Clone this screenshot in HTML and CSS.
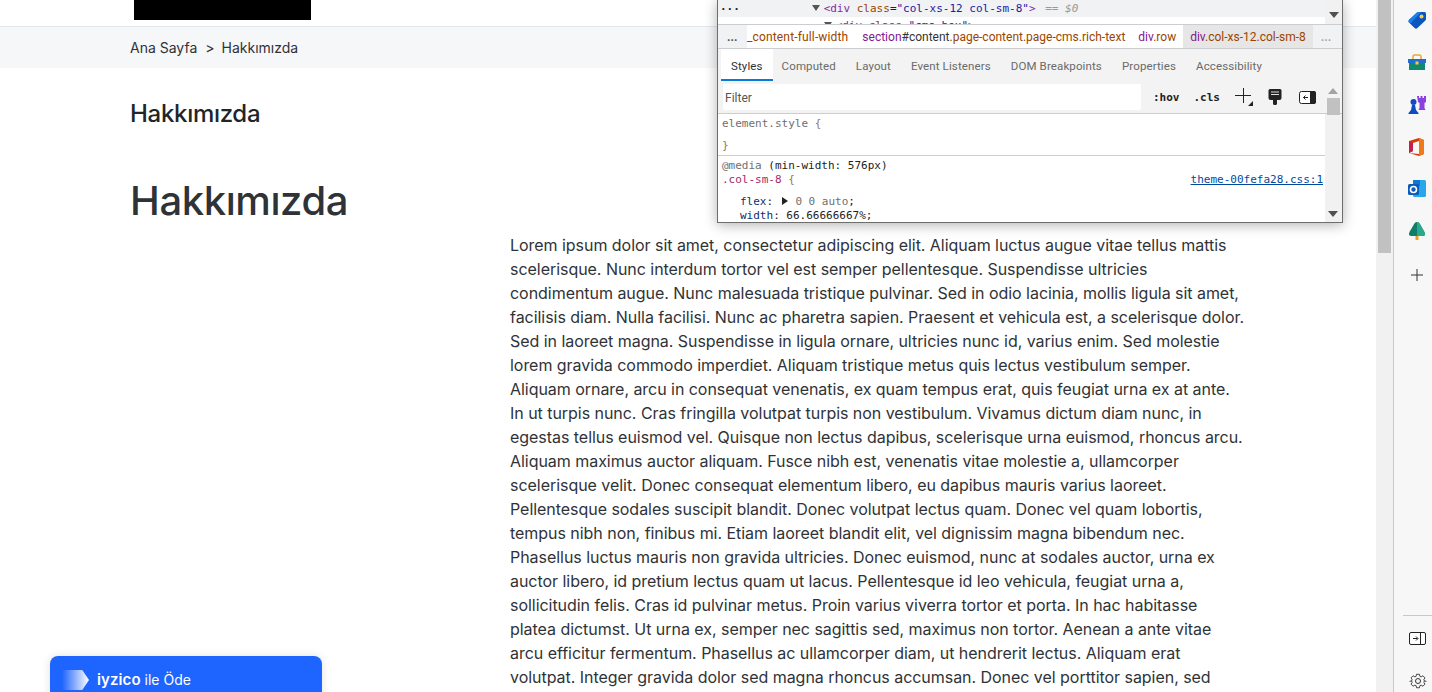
FILE: index.html
```html
<!DOCTYPE html>
<html lang="tr">
<head>
  <meta charset="UTF-8">
  <meta name="viewport" content="width=device-width, initial-scale=1.0">
  <title>Hakkımızda</title>
  <link rel="stylesheet" href="styles.css">
</head>
<body>
  <div class="app">
    <div class="page">
      <header class="top">
        <div class="logo"></div>
      </header>

      <nav class="crumbs">
        <a href="#">Ana Sayfa</a>
        <span class="sep">&gt;</span>
        <a href="#">Hakkımızda</a>
      </nav>

      <main class="content">
        <div class="side-title">Hakkımızda</div>
        <h1>Hakkımızda</h1>
        <p class="lorem">Lorem ipsum dolor sit amet, consectetur adipiscing elit. Aliquam luctus augue vitae tellus mattis scelerisque. Nunc interdum tortor vel est semper pellentesque. Suspendisse ultricies condimentum augue. Nunc malesuada tristique pulvinar. Sed in odio lacinia, mollis ligula sit amet, facilisis diam. Nulla facilisi. Nunc ac pharetra sapien. Praesent et vehicula est, a scelerisque dolor. Sed in laoreet magna. Suspendisse in ligula ornare, ultricies nunc id, varius enim. Sed molestie lorem gravida commodo imperdiet. Aliquam tristique metus quis lectus vestibulum semper. Aliquam ornare, arcu in consequat venenatis, ex quam tempus erat, quis feugiat urna ex at ante. In ut turpis nunc. Cras fringilla volutpat turpis non vestibulum. Vivamus dictum diam nunc, in egestas tellus euismod vel. Quisque non lectus dapibus, scelerisque urna euismod, rhoncus arcu. Aliquam maximus auctor aliquam. Fusce nibh est, venenatis vitae molestie a, ullamcorper scelerisque velit. Donec consequat elementum libero, eu dapibus mauris varius laoreet. Pellentesque sodales suscipit blandit. Donec volutpat lectus quam. Donec vel quam lobortis, tempus nibh non, finibus mi. Etiam laoreet blandit elit, vel dignissim magna bibendum nec. Phasellus luctus mauris non gravida ultricies. Donec euismod, nunc at sodales auctor, urna ex auctor libero, id pretium lectus quam ut lacus. Pellentesque id leo vehicula, feugiat urna a, sollicitudin felis. Cras id pulvinar metus. Proin varius viverra tortor et porta. In hac habitasse platea dictumst. Ut urna ex, semper nec sagittis sed, maximus non tortor. Aenean a ante vitae arcu efficitur fermentum. Phasellus ac ullamcorper diam, ut hendrerit lectus. Aliquam erat volutpat. Integer gravida dolor sed magna rhoncus accumsan. Donec vel porttitor sapien, sed</p>
      </main>

      <div class="pay-btn">
        <span class="pay-mark"></span>
        <span class="pay-text"><b>iyzico</b> ile Öde</span>
      </div>

      <section class="devtools">
        <div class="dom-tree">
          <div class="dom-row selected">
            <span class="dots">...</span>
            <span class="tri"></span>
            <span class="t-tag">&lt;div</span> <span class="t-attr">class</span>=<span class="t-val">"col-xs-12 col-sm-8"</span><span class="t-tag">&gt;</span>
            <span class="t-eq">== <i>$0</i></span>
          </div>
          <div class="dom-row second">
            <span class="tri"></span>
            <span class="t-tag">&lt;div</span> <span class="t-attr">class</span>=<span class="t-val">"cms-box"</span><span class="t-tag">&gt;</span>
          </div>
          <span class="tree-scroll"><span class="tree-down"></span></span>
        </div>

        <div class="path-bar">
          <span class="path-more">...</span>
          <span class="path-item path-first"><span class="c-or">_content-full-width</span></span>
          <span class="path-item path-section"><span class="c-pu">section</span>#content<span class="c-or">.page-content.page-cms.rich-text</span></span>
          <span class="path-item"><span class="c-pu">div</span><span class="c-or">.row</span></span>
          <span class="path-item active"><span class="c-pu">div</span><span class="c-or">.col-xs-12.col-sm-8</span></span>
          <span class="path-more end">...</span>
        </div>

        <div class="tabs">
          <span class="tab active">Styles</span>
          <span class="tab">Computed</span>
          <span class="tab">Layout</span>
          <span class="tab">Event Listeners</span>
          <span class="tab">DOM Breakpoints</span>
          <span class="tab">Properties</span>
          <span class="tab">Accessibility</span>
        </div>

        <div class="filter-bar">
          <div class="filter">Filter</div>
          <span class="tool">:hov</span>
          <span class="tool">.cls</span>
          <svg class="tool-icon plus-icon" width="20" height="20" viewBox="0 0 20 20"><path d="M9.500 1v15M1 8.500h16" stroke="#222" fill="none"/><path d="M19 14v5h-5z" fill="#222"/></svg>
          <svg class="tool-icon paint" width="14" height="16" viewBox="0 0 14 16"><path d="M2 0h10a1.500 1.500 0 0 1 1.500 1.500v7.500a2 2 0 0 1-2 2H9v3.500a1.500 1.500 0 0 1-1.500 1.500h-1A1.500 1.500 0 0 1 5 14.500V11H2.500a2 2 0 0 1-2-2V1.500A1.500 1.500 0 0 1 2 0z" fill="#222"/><path d="M3 3h8M3 5.500h8" stroke="#ddd"/></svg>
          <svg class="tool-icon" width="17" height="13" viewBox="0 0 17 13"><rect x=".5" y=".5" width="16" height="12" rx="2" fill="#fff" stroke="#222"/><path d="M11 0h4a2 2 0 0 1 2 2v9a2 2 0 0 1-2 2h-4z" fill="#222"/><path d="M9 6.500H4.500M6.500 4.500l-2 2 2 2" stroke="#222" fill="none"/></svg>
        </div>

        <div class="rules">
          <div class="rules-body">
            <div class="rule first">
              <div class="code gray">element.style <span class="brace">{</span></div>
              <div class="code brace gap">}</div>
            </div>
            <div class="rule">
              <div class="code"><span class="gray">@media</span> (min-width: 576px)</div>
              <div class="code sel-row">
                <span><span class="sel">.col-sm-8</span> <span class="brace">{</span></span>
                <a class="src" href="#">theme-00fefa28.css:1</a>
              </div>
              <div class="code prop prop-first"><span class="p-name">flex</span>: <span class="flex-tri"></span> <span class="gray">0 0 auto</span>;</div>
              <div class="code prop"><span class="p-name">width</span>: 66.66666667%;</div>
            </div>
          </div>
          <div class="rules-scroll">
            <span class="arrow-up"></span>
            <span class="thumb"></span>
            <span class="arrow-down"></span>
          </div>
        </div>
      </section>
    </div>

    <div class="page-scroll"><span class="page-thumb"></span></div>

    <aside class="sidebar">
      <div class="side-top">
        <svg width="20" height="20" viewBox="0 0 20 20"><path d="M12 1h5.500A1.500 1.500 0 0 1 19 2.500V8a2 2 0 0 1-.6 1.400l-8 7.600a2 2 0 0 1-2.800 0L2 11.500a2 2 0 0 1 0-2.800l8-7.200A2.500 2.500 0 0 1 12 1z" fill="#0a55c0"/><path d="M2 9l8-7.500A2.500 2.500 0 0 1 12 1h2L3.500 12.500 2 11.500a2 2 0 0 1 0-2.500z" fill="#1a7fe8"/><circle cx="14.500" cy="5.500" r="2" fill="#ffc83d"/></svg>
        <svg width="20" height="20" viewBox="0 0 20 20"><path d="M6 6V3.500A1.500 1.500 0 0 1 7.500 2h5A1.500 1.500 0 0 1 14 3.500V6" fill="none" stroke="#e8a93a" stroke-width="1.500"/><rect x="1" y="6" width="18" height="4" fill="#1f6fd0"/><rect x="2" y="10" width="16" height="7" fill="#0f8a70"/><rect x="8.500" y="8.500" width="3" height="3" fill="#ffc83d"/></svg>
        <svg width="20" height="20" viewBox="0 0 20 20"><path d="M11 1h2v2h1.500V1h2v2H18V1h2v6l-1.500 1v5l1 2h-7l1-2V8L12 7z" transform="translate(-1 0)" fill="#8b3fe0"/><circle cx="6.500" cy="7" r="3" fill="#0f4cc4"/><path d="M5 10h3l1 5 2.500 3v1H1.500v-1L4 15z" fill="#0f4cc4"/></svg>
        <svg width="20" height="20" viewBox="0 0 20 20"><path d="M2 4l10-3 5 2v14l-5 2-10-3 10 1V4L6 6v8l-4 2z" fill="#d83b01"/><path d="M2 4l4 2v8l-4 2z" fill="#c4204f"/><path d="M12 1l5 2v14l-5 2z" fill="#f07a1a"/></svg>
        <svg width="20" height="20" viewBox="0 0 20 20"><rect x="6" y="1" width="13" height="17" rx="1.500" fill="#28a8ea"/><rect x="6" y="1" width="7" height="6" fill="#0f78d4"/><rect x="1" y="5" width="11" height="11" rx="1.500" fill="#0a5cb8"/><circle cx="6.500" cy="10.500" r="3" fill="none" stroke="#fff" stroke-width="1.600"/></svg>
        <svg width="20" height="20" viewBox="0 0 20 20"><path d="M10 1c2 0 3 2 4 4s4 6 4 8-1 2-8 2-8 0-8-2 3-6 4-8 2-4 4-4z" fill="#0f7d68"/><path d="M10 1c2 0 3 2 4 4s4 6 4 8-1 2-8 2z" fill="#2aa98c"/><rect x="8.500" y="15" width="3" height="4" fill="#f0a020"/></svg>
        <svg class="plus" width="14" height="14" viewBox="0 0 14 14"><path d="M7 1v12M1 7h12" stroke="#333" fill="none"/></svg>
      </div>
      <div class="side-bottom">
        <svg width="17" height="14" viewBox="0 0 17 14"><rect x=".5" y=".5" width="16" height="12" rx="1.500" fill="#fff" stroke="#222"/><path d="M11.500 1v11" stroke="#222"/><path d="M4 6.500h4.500M7 4.500l2 2-2 2" stroke="#222" fill="none"/></svg>
        <svg width="18" height="18" viewBox="0 0 18 18" fill="none" stroke="#333"><circle cx="9" cy="9" r="2.500"/><path d="M7.400 1.500h3.200l.5 2.300 1.400.6 2-1.200 2.200 2.300-1.200 2 .6 1.400 2.300.5M7.400 1.500l-.5 2.300-1.400.6-2-1.200-2.200 2.300 1.200 2-.6 1.400-2.300.5" transform="translate(.9 .9) scale(.9)"/><path d="M7.400 16.500h3.200l.5-2.300 1.400-.6 2 1.200 2.200-2.300-1.200-2 .6-1.400 .2-.1M7.400 16.500l-.5-2.300-1.400-.6-2 1.200-2.200-2.300 1.200-2-.6-1.400-.2-.1" transform="translate(.9 .9) scale(.9)"/></svg>
      </div>
    </aside>
  </div>
</body>
</html>
```
FILE: styles.css
```css
* {
  box-sizing: border-box;
}
html, body {
  margin: 0;
  height: 100%;
  overflow: hidden;
}
body {
  font-family: Inter, "Liberation Sans", sans-serif;
  color: #2f3337;
  background: #fff;
}
.app {
  display: flex;
  height: 692px;
}
.page {
  flex: 1;
  position: relative;
  overflow: hidden;
}

/* site header */
.top {
  height: 27px;
  padding-left: 134px;
  border-bottom: 1px solid #e6e7e9;
}
.logo {
  width: 177px;
  height: 20px;
  background: #000;
}
.crumbs {
  height: 41px;
  padding-left: 130px;
  display: flex;
  align-items: center;
  gap: 8px;
  background: #f6f7f9;
  font-size: 14px;
}
.crumbs a {
  color: #2f3337;
  text-decoration: none;
}
.crumbs .sep {
  margin-right: -1px;
}
.content {
  padding: 32px 0 0 130px;
}
.side-title {
  font-size: 24px;
  line-height: 28px;
  font-weight: 500;
  letter-spacing: -0.3px;
  color: #212529;
}
.content h1 {
  margin: 49px 0 0;
  font-size: 40px;
  line-height: 48px;
  font-weight: 500;
  letter-spacing: -0.4px;
}
.lorem {
  margin: 8px 0 0 380px;
  width: 736px;
  font-size: 16px;
  line-height: 24px;
  letter-spacing: -0.04px;
}

/* pay button */
.pay-btn {
  position: absolute;
  left: 50px;
  top: 656px;
  width: 272px;
  height: 50px;
  padding: 14px 12px;
  display: flex;
  gap: 8px;
  align-items: flex-start;
  background: #1e64ff;
  border-radius: 8px 8px 0 0;
  box-shadow: 0 0 10px rgba(0,0,0,0.12);
  color: #fff;
}
.pay-mark {
  width: 27px;
  height: 20px;
  background: linear-gradient(90deg, #1e64ff, #fff);
  clip-path: polygon(0 0, 75% 0, 100% 50%, 75% 100%, 0 100%);
}
.pay-text {
  font-size: 14px;
  line-height: 20px;
}
.pay-text b {
  font-size: 15px;
  font-weight: 600;
  letter-spacing: 0.1px;
}

/* devtools popup */
.devtools {
  position: absolute;
  left: 717px;
  top: 0;
  width: 626px;
  height: 223px;
  display: flex;
  flex-direction: column;
  background: #fff;
  border: 1px solid #6e6e6e;
  border-top: 0;
  box-shadow: 0 2px 12px rgba(0,0,0,0.3);
  font-family: "Liberation Sans", Arial, sans-serif;
}
.dom-tree {
  position: relative;
  height: 25px;
  flex: none;
  overflow: hidden;
  font-family: "DejaVu Sans Mono", monospace;
  font-size: 11px;
  border-bottom: 1px solid #cbcdd1;
  padding-right: 17px;
}
.dom-row {
  height: 17px;
  line-height: 17px;
  white-space: nowrap;
  padding-left: 94px;
  color: #222;
}
.dom-row.selected {
  background: #f1f2f3;
}
.dom-row .dots {
  position: absolute;
  left: 2px;
  top: 0;
  font-weight: bold;
  line-height: 14px;
}
.dom-row .tri {
  display: inline-block;
  width: 0;
  height: 0;
  margin-right: -3px;
  border-top: 6px solid #555;
  border-left: 4px solid transparent;
  border-right: 4px solid transparent;
  vertical-align: 1px;
}
.dom-row.second {
  padding-left: 106px;
}
.t-tag {
  color: #7f2aa8;
}
.t-attr {
  color: #994500;
}
.t-val {
  color: #1a1aa6;
}
.t-eq {
  color: #999;
  margin-left: 3px;
}
.tree-scroll {
  position: absolute;
  right: 0;
  top: 0;
  width: 17px;
  height: 100%;
  background: #f1f1f1;
}
.tree-down {
  position: absolute;
  left: 4px;
  top: 12px;
  width: 0;
  height: 0;
  border-top: 6px solid #505050;
  border-left: 5px solid transparent;
  border-right: 5px solid transparent;
}
.path-bar {
  height: 24px;
  flex: none;
  display: flex;
  align-items: stretch;
  font-family: Roboto, sans-serif;
  font-size: 12px;
  line-height: 24px;
  border-bottom: 1px solid #cbcdd1;
  white-space: nowrap;
  overflow: hidden;
}
.path-more {
  width: 29px;
  padding-left: 9px;
  background: #f1f2f3;
  color: #555;
  font-weight: bold;
  flex: none;
}
.path-more.end {
  flex: 1;
  color: #aaa;
  padding-left: 8px;
}
.path-item {
  padding: 0 7px;
  color: #333;
}
.path-first {
  padding: 0 7px 0 0;
  letter-spacing: 0.15px;
}
.path-section {
  padding-right: 6px;
}
.path-item.active {
  background: #e6e6e6;
}
.c-or {
  color: #994500;
}
.c-pu {
  color: #85178f;
}
.tabs {
  height: 32px;
  flex: none;
  display: flex;
  padding-left: 3px;
  background: #f3f3f3;
  font-family: Roboto, sans-serif;
  font-size: 11.5px;
  letter-spacing: 0.12px;
  color: #6a6a6a;
}
.tab {
  padding: 0 10px;
  line-height: 34px;
}
.tab.active {
  margin-right: -1px;
  background: #fff;
  color: #333;
  border-bottom: 2px solid #0a7ad4;
}
.filter-bar {
  height: 33px;
  flex: none;
  display: flex;
  align-items: center;
  background: #f3f3f3;
  border-bottom: 1px solid #cbcdd1;
  padding-left: 5px;
}
.filter {
  width: 418px;
  height: 26px;
  margin-right: 12px;
  padding-left: 2px;
  background: #fff;
  font-family: Roboto, sans-serif;
  font-size: 12px;
  line-height: 28px;
  color: #555;
  border-radius: 2px;
}
.tool {
  font-family: "DejaVu Sans Mono", monospace;
  font-size: 11px;
  font-weight: bold;
  color: #222;
  margin-right: 14px;
}
.tool-icon {
  margin-right: 13px;
  flex: none;
}
.tool-icon.plus-icon {
  margin-right: 14px;
}
.tool-icon.paint {
  margin-right: 17px;
}
.rules {
  flex: 1;
  min-height: 0;
  display: flex;
}
.rules-body {
  flex: 1;
  min-width: 0;
  overflow: hidden;
  font-family: "DejaVu Sans Mono", monospace;
  font-size: 11px;
  line-height: 14px;
  color: #222;
}
.rule {
  padding: 3px 2px 0 4px;
}
.rule.first {
  height: 42px;
  border-bottom: 1px solid #cbcdd1;
}
.gray {
  color: #6f6f6f;
}
.brace {
  color: #8f7a6a;
}
.code.gap {
  margin-top: 8px;
}
.sel-row {
  display: flex;
  justify-content: space-between;
}
.sel {
  color: #a6286b;
}
.src {
  color: #004a9c;
}
.prop {
  padding-left: 18px;
}
.prop-first {
  margin-top: 8px;
}
.p-name {
  color: #0d2f6b;
}
.flex-tri {
  display: inline-block;
  width: 0;
  height: 0;
  border-left: 6px solid #222;
  border-top: 4px solid transparent;
  border-bottom: 4px solid transparent;
  margin: 0 1px 0 2px;
}
.rules-scroll {
  width: 17px;
  flex: none;
  position: relative;
  background: #f1f1f1;
}
.rules-scroll span {
  position: absolute;
}
.arrow-up {
  left: 3px;
  top: -26px;
  border-bottom: 6px solid #a3a3a3;
  border-left: 5px solid transparent;
  border-right: 5px solid transparent;
}
.thumb {
  top: -16px;
  height: 17px;
  left: 2px;
  width: 13px;
  background: #c1c1c1;
}
.arrow-down {
  left: 3px;
  bottom: 5px;
  border-top: 6px solid #505050;
  border-left: 5px solid transparent;
  border-right: 5px solid transparent;
}

/* browser chrome on the right */
.page-scroll {
  width: 17px;
  flex: none;
  background: #f1f1f1;
}
.page-thumb {
  display: block;
  width: 13px;
  height: 253px;
  margin-left: 2px;
  background: #c1c1c1;
}
.sidebar {
  width: 39px;
  flex: none;
  display: flex;
  flex-direction: column;
  justify-content: space-between;
  background: #f7f7f7;
  border-left: 1px solid #c9c9c9;
}
.side-top {
  display: flex;
  flex-direction: column;
  align-items: center;
  gap: 22px;
  padding: 11px 0 0 8px;
}
.side-top .plus {
  margin-top: 5px;
}
.side-bottom {
  display: flex;
  flex-direction: column;
  align-items: center;
  gap: 26px;
  margin-left: 9px;
  padding-top: 16px;
  padding-bottom: 2px;
  border-top: 1px solid #c9c9c9;
}
```
